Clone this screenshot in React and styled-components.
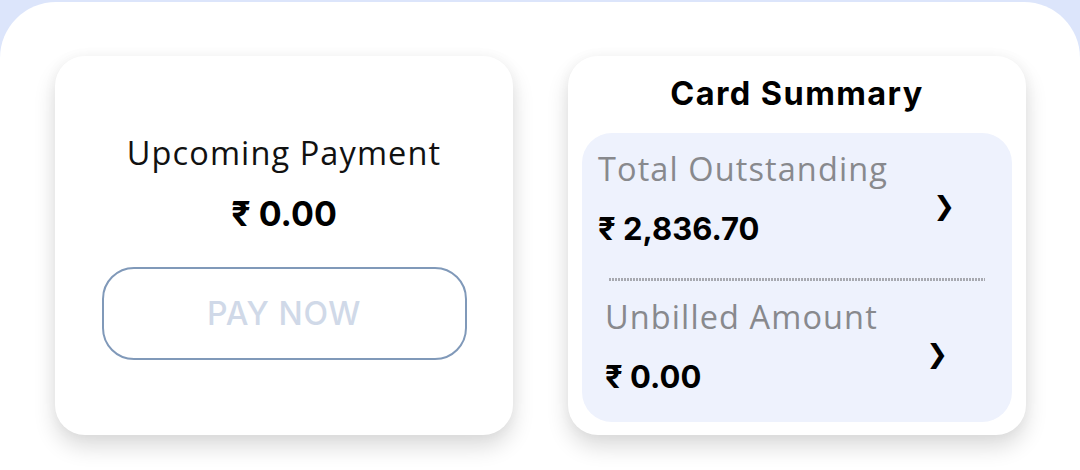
import styled, { createGlobalStyle } from "styled-components";

const GlobalStyle = createGlobalStyle`
    html, body {
        margin: 0;
        padding: 0;
        background: #dce5fb;
        font-family: "Open Sans", "Noto Sans", sans-serif;
    }
`;

const Sheet = styled.div`
    margin-top: 2px;
    height: 468px;
    background: #ffffff;
    border-radius: 56px 56px 0 0;
    display: grid;
    grid-template-columns: 458px 458px;
    gap: 55px;
    padding: 54px 54px 0 55px;
    box-sizing: border-box;
`;

const Card = styled.div`
    background: #ffffff;
    border-radius: 30px;
    height: 379px;
    box-shadow: 0 12px 22px rgba(0, 0, 0, 0.14), 0 0 14px rgba(0, 0, 0, 0.04);
    box-sizing: border-box;
    display: flex;
    flex-direction: column;
    align-items: center;
`;

const PaymentCard = styled(Card)`
    padding-top: 77px;
`;

const Label = styled.div`
    font-size: 32.5px;
    color: ${(p) => p.color || "#111"};
    line-height: 40px;
    letter-spacing: 1.1px;
    white-space: nowrap;
`;

const Amount = styled.div`
    font-family: "Inter", "Roboto", sans-serif;
    font-weight: 700;
    font-size: ${(p) => p.size || 30}px;
    color: #000;
    line-height: 40px;
    margin-top: ${(p) => p.gap || 0}px;
`;

const PayButton = styled.button`
    margin-top: 33px;
    width: 365px;
    height: 93px;
    border: 2px solid #8099b9;
    border-radius: 32px;
    background: #fff;
    color: #d0d9e8;
    font-family: "Inter", "Roboto", sans-serif;
    font-weight: 500;
    font-size: 32px;
    letter-spacing: 0.6px;
`;

const SummaryCard = styled(Card)`
    padding: 18px 14px 13px;
    align-items: stretch;
`;

const Title = styled.div`
    text-align: center;
    font-family: "Inter", "Roboto", sans-serif;
    font-weight: 700;
    font-size: 32.5px;
    letter-spacing: 1.4px;
    line-height: 40px;
    margin-bottom: 19px;
`;

const Panel = styled.div`
    flex: 1;
    background: #eef2fd;
    border-radius: 30px;
    display: flex;
    flex-direction: column;
`;

const Row = styled.div`
    display: flex;
    align-items: flex-start;
    justify-content: space-between;
    padding: ${(p) => p.pad};
    height: ${(p) => p.h}px;
    box-sizing: border-box;
`;

const RowText = styled.div`
    display: flex;
    flex-direction: column;
`;

const Chevron = styled.span`
    font-family: "DejaVu Sans", sans-serif;
    font-weight: 700;
    font-size: 26px;
    line-height: 30px;
    color: #000;
    margin-top: 42px;
`;

const Divider = styled.div`
    margin: 0 27px;
    height: 3px;
    background: repeating-linear-gradient(90deg, #a7a9b0 0 2px, transparent 2px 3px);
`;

export default function App() {
    return (
        <>
            <GlobalStyle />
            <Sheet>
                <PaymentCard>
                    <Label>Upcoming Payment</Label>
                    <Amount size={34} gap={21}>₹ 0.00</Amount>
                    <PayButton>PAY NOW</PayButton>
                </PaymentCard>
                <SummaryCard>
                    <Title>Card Summary</Title>
                    <Panel>
                        <Row pad="16px 57px 0 16px" h={145}>
                            <RowText>
                                <Label color="#88898d">Total Outstanding</Label>
                                <Amount size={31} gap={20}>₹ 2,836.70</Amount>
                            </RowText>
                            <Chevron>❯</Chevron>
                        </Row>
                        <Divider />
                        <Row pad="16px 64px 0 23px" h={141}>
                            <RowText>
                                <Label color="#88898d">Unbilled Amount</Label>
                                <Amount size={31} gap={20}>₹ 0.00</Amount>
                            </RowText>
                            <Chevron>❯</Chevron>
                        </Row>
                    </Panel>
                </SummaryCard>
            </Sheet>
        </>
    );
}
